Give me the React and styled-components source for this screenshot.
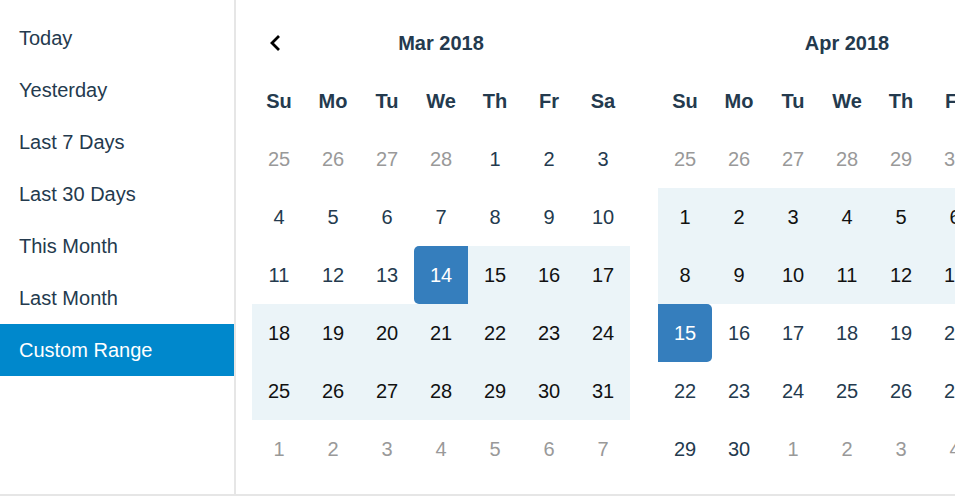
import React from 'react'
import styled, { createGlobalStyle } from 'styled-components'

const GlobalStyle = createGlobalStyle`
    body {
        margin: 0;
        background: #fff;
        font-family: "Liberation Sans", Arial, sans-serif;
        color: #243a4e;
    }
`

const ranges = ['Today', 'Yesterday', 'Last 7 Days', 'Last 30 Days', 'This Month', 'Last Month', 'Custom Range']
const weekdays = ['Su', 'Mo', 'Tu', 'We', 'Th', 'Fr', 'Sa']

// range start / end as comparable numbers (month * 100 + day)
const START = 314
const END = 415

const buildMonth = (year, month) => {
    let first = new Date(year, month - 1, 1).getDay()
    if (first === 0) first = 7 // always show a week of the previous month
    const daysIn = new Date(year, month, 0).getDate()
    const prevDays = new Date(year, month - 1, 0).getDate()
    const cells = []
    for (let i = first - 1; i >= 0; i--) cells.push({ day: prevDays - i, off: true })
    for (let d = 1; d <= daysIn; d++) cells.push({ day: d, off: false, key: month * 100 + d })
    let n = 1
    while (cells.length < 42) cells.push({ day: n++, off: true })
    return cells
}

const months = [
    { label: 'Mar 2018', cells: buildMonth(2018, 3), prev: true },
    { label: 'Apr 2018', cells: buildMonth(2018, 4), prev: false },
]

const ChevronLeft = () => (
    <svg width="14" height="18" viewBox="0 0 14 18">
        <polyline points="10,2 3,9 10,16" fill="none" stroke="#000" strokeWidth="2.8" />
    </svg>
)

const App = () => {
    return (
        <>
            <GlobalStyle />
            <Picker>
                <Ranges>
                    {ranges.map(r => (
                        <RangeItem key={r} $active={r === 'Custom Range'}>{r}</RangeItem>
                    ))}
                </Ranges>
                <Calendars>
                    {months.map(m => (
                        <Month key={m.label}>
                            <NavCell>{m.prev && <ChevronLeft />}</NavCell>
                            <Title>{m.label}</Title>
                            <NavCell />
                            {weekdays.map(w => <Weekday key={w}>{w}</Weekday>)}
                            {m.cells.map((c, i) => {
                                const inRange = !c.off && c.key >= START && c.key <= END
                                return (
                                    <Day
                                        key={i}
                                        $off={c.off}
                                        $inRange={inRange}
                                        $start={!c.off && c.key === START}
                                        $end={!c.off && c.key === END}
                                    >
                                        {c.day}
                                    </Day>
                                )
                            })}
                        </Month>
                    ))}
                </Calendars>
            </Picker>
        </>
    )
}

export default App

const Picker = styled.div`
    display: flex;
    width: 100%;
    height: 494px;
    border-bottom: 2px solid #e6e6e6;
    overflow: hidden;
`

const Ranges = styled.ul`
    list-style: none;
    margin: 0;
    padding: 12px 0 0;
    width: 234px;
    flex-shrink: 0;
    border-right: 2px solid #e6e6e6;
`

const RangeItem = styled.li`
    height: 52px;
    display: flex;
    align-items: center;
    padding-left: 19px;
    font-size: 20px;
    color: ${p => p.$active ? '#fff' : '#243a4e'};
    background: ${p => p.$active ? '#0088cc' : 'transparent'};
`

const Calendars = styled.div`
    display: flex;
    gap: 28px;
    padding: 14px 0 0 16px;
`

const Month = styled.div`
    display: grid;
    grid-template-columns: repeat(7, 54px);
    grid-auto-rows: 58px;
    flex-shrink: 0;
`

const NavCell = styled.div`
    display: flex;
    align-items: center;
    justify-content: center;
    padding-right: 6px;
`

const Title = styled.div`
    grid-column: span 5;
    display: flex;
    align-items: center;
    justify-content: center;
    font-size: 20px;
    font-weight: 700;
    color: #243a4e;
`

const Weekday = styled.div`
    display: flex;
    align-items: center;
    justify-content: center;
    font-size: 20px;
    font-weight: 700;
    color: #243a4e;
`

const Day = styled.div`
    display: flex;
    align-items: center;
    justify-content: center;
    font-size: 20px;
    color: ${p => p.$start || p.$end ? '#fff' : p.$off ? '#999' : p.$inRange ? '#111' : '#243a4e'};
    background: ${p => p.$start || p.$end ? '#357ebd' : p.$inRange ? '#ebf4f8' : 'transparent'};
    border-radius: ${p => p.$start ? '5px 0 0 5px' : p.$end ? '0 5px 5px 0' : '0'};
`
